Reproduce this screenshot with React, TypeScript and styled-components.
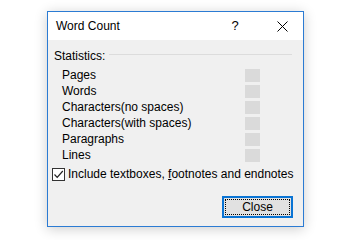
import React from 'react'
import styled, { createGlobalStyle } from 'styled-components'

const GlobalStyle = createGlobalStyle`
    html, body {
        margin: 0;
        padding: 0;
        background: #ffffff;
        font-family: 'Liberation Sans', Arial, sans-serif;
        font-size: 12px;
        color: #000;
    }
`

const Page = styled.div`
    width: 345px;
    height: 240px;
    padding: 11px 0 0 47px;
    box-sizing: border-box;
`

const Dialog = styled.div`
    width: 257px;
    height: 216px;
    box-sizing: border-box;
    border: 1px solid #2b7bd3;
    background: #f0f0f0;
    box-shadow: 0 2px 12px rgba(0, 0, 0, 0.2);
    display: flex;
    flex-direction: column;
`

const TitleBar = styled.div`
    height: 28px;
    background: #fff;
    display: flex;
    align-items: center;
    padding-left: 8px;
`

const Title = styled.div`
    flex: 1;
    font-size: 12px;
    line-height: 16px;
`

const HelpButton = styled.div`
    width: 20px;
    margin-right: 14px;
    text-align: center;
    font-size: 13px;
    line-height: 16px;
`

const CloseIcon = styled.div`
    width: 46px;
    height: 28px;
    display: flex;
    align-items: center;
    justify-content: center;
    margin-right: -2px;
`

const Body = styled.div`
    flex: 1;
    padding: 8px 10px 8px 6px;
    display: flex;
    flex-direction: column;
`

const GroupHeader = styled.div`
    display: flex;
    align-items: center;
    line-height: 16px;
    gap: 4px;
    padding-right: 1px;
`

const GroupLine = styled.div`
    flex: 1;
    height: 1px;
    background: #dcdcdc;
    margin-top: -3px;
`

const StatList = styled.div`
    margin-top: 3px;
    padding-left: 8px;
    display: flex;
    flex-direction: column;
`

const StatRow = styled.div`
    display: flex;
    align-items: center;
    height: 16px;
    line-height: 16px;
`

const StatLabel = styled.span`
    flex: 1;
`

const StatValue = styled.div`
    width: 15px;
    height: 13px;
    background: #dadada;
    margin-right: 33px;
`

const CheckRow = styled.label`
    display: flex;
    align-items: center;
    margin: 3px 0 0 -2px;
    height: 16px;
    line-height: 16px;
    gap: 3px;
    white-space: nowrap;
`

const CheckBox = styled.div`
    flex: none;
    width: 13px;
    height: 13px;
    box-sizing: border-box;
    border: 1px solid #333;
    background: #fff;
    display: flex;
    align-items: center;
    justify-content: center;
`

const Underlined = styled.span`
    text-decoration: underline;
`

const Footer = styled.div`
    display: flex;
    justify-content: flex-end;
    margin-top: 14px;
`

const Button = styled.button`
    width: 71px;
    height: 22px;
    box-sizing: border-box;
    border: 2px solid #0a74d4;
    background: #e1e1e1;
    padding: 1px;
    font-family: 'Liberation Sans', Arial, sans-serif;
    font-size: 12px;
    color: #000;
`

const FocusRing = styled.div`
    height: 100%;
    box-sizing: border-box;
    border: 1px dotted #000;
    display: flex;
    align-items: center;
    justify-content: center;
`

const stats = ['Pages', 'Words', 'Characters(no spaces)', 'Characters(with spaces)', 'Paragraphs', 'Lines']

const App = () => {
    return (
        <Page>
            <GlobalStyle />
            <Dialog>
                <TitleBar>
                    <Title>Word Count</Title>
                    <HelpButton>?</HelpButton>
                    <CloseIcon>
                        <svg width="11" height="11" viewBox="0 0 11 11">
                            <path d="M0.5 0.5 L10.5 10.5 M10.5 0.5 L0.5 10.5" stroke="#000" strokeWidth="1" fill="none" />
                        </svg>
                    </CloseIcon>
                </TitleBar>
                <Body>
                    <GroupHeader>
                        <span>Statistics:</span>
                        <GroupLine />
                    </GroupHeader>
                    <StatList>
                        {stats.map((s) => (
                            <StatRow key={s}>
                                <StatLabel>{s}</StatLabel>
                                <StatValue />
                            </StatRow>
                        ))}
                    </StatList>
                    <CheckRow>
                        <CheckBox>
                            <svg width="11" height="11" viewBox="0 0 11 11">
                                <path d="M1.5 5.5 L4.2 8.3 L9.8 2" stroke="#222" strokeWidth="1.2" fill="none" />
                            </svg>
                        </CheckBox>
                        <span>
                            Include textboxes, <Underlined>f</Underlined>ootnotes and endnotes
                        </span>
                    </CheckRow>
                    <Footer>
                        <Button>
                            <FocusRing>Close</FocusRing>
                        </Button>
                    </Footer>
                </Body>
            </Dialog>
        </Page>
    )
}

export default App
